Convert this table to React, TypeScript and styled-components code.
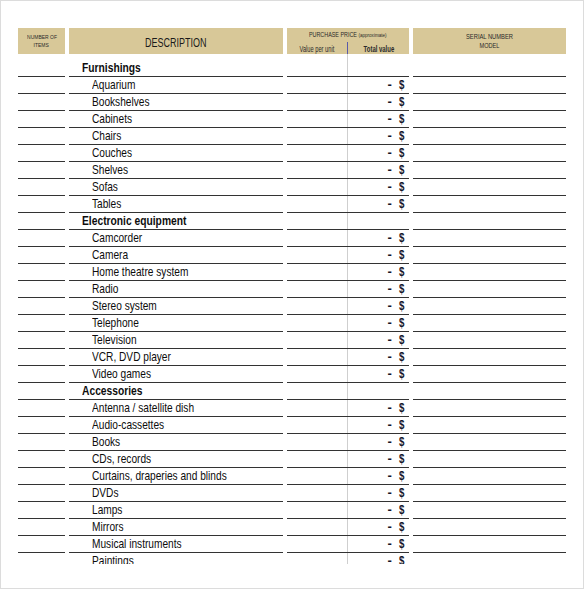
import styled, { createGlobalStyle } from "styled-components";

const GlobalStyle = createGlobalStyle`
  body {
    margin: 0;
    background: #fff;
    font-family: "Liberation Sans", Arial, sans-serif;
    color: #111;
  }
`;

type Item = { name: string; category?: boolean };

const items: Item[] = [
  { name: "Furnishings", category: true },
  { name: "Aquarium" },
  { name: "Bookshelves" },
  { name: "Cabinets" },
  { name: "Chairs" },
  { name: "Couches" },
  { name: "Shelves" },
  { name: "Sofas" },
  { name: "Tables" },
  { name: "Electronic equipment", category: true },
  { name: "Camcorder" },
  { name: "Camera" },
  { name: "Home theatre system" },
  { name: "Radio" },
  { name: "Stereo system" },
  { name: "Telephone" },
  { name: "Television" },
  { name: "VCR, DVD player" },
  { name: "Video games" },
  { name: "Accessories", category: true },
  { name: "Antenna / satellite dish" },
  { name: "Audio-cassettes" },
  { name: "Books" },
  { name: "CDs, records" },
  { name: "Curtains, draperies and blinds" },
  { name: "DVDs" },
  { name: "Lamps" },
  { name: "Mirrors" },
  { name: "Musical instruments" },
  { name: "Paintings" },
];

// the sheet uses a narrow face; squeeze the regular one to its width
const Narrow = styled.span<{ scale: number; origin?: string }>`
  display: inline-block;
  white-space: nowrap;
  transform: scaleX(${(p) => p.scale});
  transform-origin: ${(p) => p.origin ?? "center"};
`;

const Frame = styled.div`
  width: 584px;
  height: 589px;
  box-sizing: border-box;
  border: 1px solid #dcdcdc;
  padding: 27px 0 0 17px;
  overflow: hidden;
`;

const Columns = styled.div`
  display: grid;
  grid-template-columns: 47px 214px 122px 153px;
  column-gap: 4px;
`;

const HeaderRow = styled(Columns)`
  height: 26px;
`;

const HeadCell = styled.div`
  background: #d8c898;
  display: flex;
  flex-direction: column;
  align-items: center;
  justify-content: center;
  color: #2a2a2a;
`;

const TinyText = styled.div<{ size?: number }>`
  font-size: ${(p) => p.size ?? 6}px;
  line-height: ${(p) => (p.size ?? 6) + 2}px;
  text-align: center;
  white-space: nowrap;
`;

const Title = styled.div`
  font-size: 12.5px;
  color: #1a1a1a;
  padding-top: 3px;
`;

const PriceHead = styled(HeadCell)`
  justify-content: flex-start;
  padding-top: 3px;
  box-sizing: border-box;
`;

const PriceSplit = styled.div`
  display: grid;
  grid-template-columns: 60px 62px;
  width: 100%;
  flex: 1;
  margin-top: 2px;
`;

const SplitLabel = styled.div<{ bold?: boolean; divider?: boolean }>`
  font-size: 8.5px;
  font-weight: ${(p) => (p.bold ? 700 : 400)};
  text-align: center;
  padding-top: 2px;
  border-left: ${(p) => (p.divider ? "1px solid #5a5aa8" : "none")};
`;

const Body = styled.div`
  height: 510px;
  padding-top: 6px;
  box-sizing: border-box;
  overflow: hidden;
  background: linear-gradient(#cfcfcf, #cfcfcf) no-repeat 329px 0 / 1px 100%;
`;

const Row = styled(Columns)`
  height: 17px;
`;

const LineCell = styled.div`
  border-bottom: 1px solid #333;
  height: 17px;
  box-sizing: border-box;
`;

const DescCell = styled(LineCell)<{ category?: boolean }>`
  font-size: 13px;
  line-height: 16px;
  padding-left: ${(p) => (p.category ? 13 : 23)}px;
  font-weight: ${(p) => (p.category ? 700 : 400)};
  white-space: nowrap;
  color: #0d0d0d;
`;

const PriceCell = styled(LineCell)`
  display: grid;
  grid-template-columns: 61px 61px;
`;

const Total = styled.div`
  display: flex;
  justify-content: flex-end;
  align-items: center;
  gap: 6px;
  padding-right: 4px;
  font-size: 13px;
  font-weight: 700;
  line-height: 16px;
  color: #14142a;
`;

export default function App() {
  return (
    <>
      <GlobalStyle />
      <Frame>
        <HeaderRow>
          <HeadCell>
            <TinyText>
              <Narrow scale={0.83}>NUMBER OF</Narrow>
            </TinyText>
            <TinyText>
              <Narrow scale={0.83}>ITEMS</Narrow>
            </TinyText>
          </HeadCell>
          <HeadCell>
            <Title>
              <Narrow scale={0.72}>DESCRIPTION</Narrow>
            </Title>
          </HeadCell>
          <PriceHead>
            <TinyText size={6.5}>
              <Narrow scale={0.83}>
                PURCHASE PRICE <span style={{ fontSize: 5.5 }}>(approximate)</span>
              </Narrow>
            </TinyText>
            <PriceSplit>
              <SplitLabel>
                <Narrow scale={0.67}>Value per unit</Narrow>
              </SplitLabel>
              <SplitLabel bold divider>
                <Narrow scale={0.7}>Total value</Narrow>
              </SplitLabel>
            </PriceSplit>
          </PriceHead>
          <HeadCell>
            <TinyText size={7.5}>
              <Narrow scale={0.77}>SERIAL NUMBER</Narrow>
            </TinyText>
            <TinyText size={7}>
              <Narrow scale={0.8}>MODEL</Narrow>
            </TinyText>
          </HeadCell>
        </HeaderRow>
        <Body>
          {items.map((it) => (
            <Row key={it.name}>
              <LineCell />
              <DescCell category={it.category}>
                <Narrow scale={it.category ? 0.79 : 0.78} origin="left">
                  {it.name}
                </Narrow>
              </DescCell>
              <PriceCell>
                <div />
                {!it.category && (
                  <Total>
                    <span>-</span>
                    <Narrow scale={0.75}>$</Narrow>
                  </Total>
                )}
              </PriceCell>
              <LineCell />
            </Row>
          ))}
        </Body>
      </Frame>
    </>
  );
}
